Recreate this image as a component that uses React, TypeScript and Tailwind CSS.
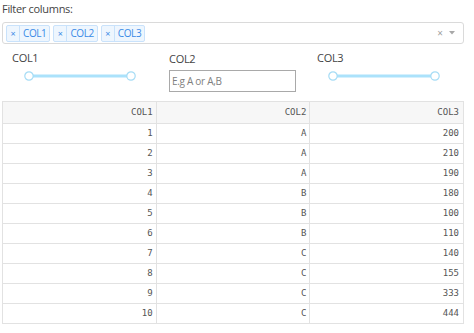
import React from "react";

const rows: [number, string, number][] = [
  [1, "A", 200],
  [2, "A", 210],
  [3, "A", 190],
  [4, "B", 180],
  [5, "B", 100],
  [6, "B", 110],
  [7, "C", 140],
  [8, "C", 155],
  [9, "C", 333],
  [10, "C", 444],
];

function Tag({ label }: { label: string }) {
  return (
    <div className="flex h-[17px] items-stretch rounded-[2px] border border-[#c9e2fb] bg-[#eef6fe] text-[#3a8ae6]">
      <span className="flex w-[13px] items-center justify-center border-r border-[#c9e2fb] text-[9px] leading-none">×</span>
      <span className="flex items-center px-[3px] text-[10px] leading-none tracking-[-0.4px]">{label}</span>
    </div>
  );
}

function Slider() {
  return (
    <svg width="112" height="10" viewBox="0 0 112 10" className="block">
      <line x1="5" y1="5" x2="107" y2="5" stroke="#abe2fb" strokeWidth="3" />
      <circle cx="5" cy="5" r="4.2" fill="#fff" stroke="#a6dcf5" strokeWidth="1.2" />
      <circle cx="107" cy="5" r="4.2" fill="#fff" stroke="#a6dcf5" strokeWidth="1.2" />
    </svg>
  );
}

export default function App() {
  return (
    <div
      className="h-[333px] w-[474px] bg-white text-[#333]"
      style={{ fontFamily: '"Open Sans", "Noto Sans", sans-serif' }}
    >
      <div className="px-[2px]">
        <div className="h-[22px] pt-[1px] text-[11px] leading-[16px] tracking-[-0.3px] text-[#444]">
          Filter columns:
        </div>
        <div className="flex h-[22px] w-[462px] items-center rounded-[3px] border border-[#dadada] pl-[3px]">
          <div className="flex gap-[3px]">
            <Tag label="COL1" />
            <Tag label="COL2" />
            <Tag label="COL3" />
          </div>
          <div className="ml-auto flex items-center gap-[6px] pr-[8px] text-[#a0a0a0]">
            <span className="text-[10px] leading-none">×</span>
            <svg width="6" height="4" viewBox="0 0 6 4" className="block">
              <polygon points="0,0 6,0 3,3.5" fill="#a8a8a8" />
            </svg>
          </div>
        </div>
        <div className="flex h-[57px] text-[11px] leading-[14px] tracking-[-0.3px] text-[#444]">
          <div className="w-[154px] pt-[7px]">
            <div className="pl-[10px]">COL1</div>
            <div className="ml-[22px] mt-[6px]">
              <Slider />
            </div>
          </div>
          <div className="w-[154px] pl-[13px] pt-[8px]">
            <div>COL2</div>
            <div className="mt-[4px] flex h-[22px] w-[127px] items-center border border-[#a9a9a9] px-[2px] text-[10px] tracking-[-0.3px] text-[#808080]">
              E.g A or A,B
            </div>
          </div>
          <div className="w-[154px] pt-[7px]">
            <div className="pl-[7px]">COL3</div>
            <div className="ml-[18px] mt-[6px]">
              <Slider />
            </div>
          </div>
        </div>
        <table
          className="w-[462px] table-fixed border-collapse text-[9px] text-[#555]"
          style={{ fontFamily: '"DejaVu Sans Mono", "Liberation Mono", monospace' }}
        >
          <thead>
            <tr className="h-[22px] bg-[#f7f7f7]">
              <th className="border border-[#e2e2e2] pr-[3px] text-right font-normal">COL1</th>
              <th className="border border-[#e2e2e2] pr-[3px] text-right font-normal">COL2</th>
              <th className="border border-[#e2e2e2] pr-[4px] text-right font-normal">COL3</th>
            </tr>
          </thead>
          <tbody>
            {rows.map(([a, b, c]) => (
              <tr key={a} className="h-[20px]">
                <td className="border border-[#e2e2e2] p-0 pr-[3px] text-right">{a}</td>
                <td className="border border-[#e2e2e2] p-0 pr-[3px] text-right">{b}</td>
                <td className="border border-[#e2e2e2] p-0 pr-[4px] text-right">{c}</td>
              </tr>
            ))}
          </tbody>
        </table>
      </div>
    </div>
  );
}
